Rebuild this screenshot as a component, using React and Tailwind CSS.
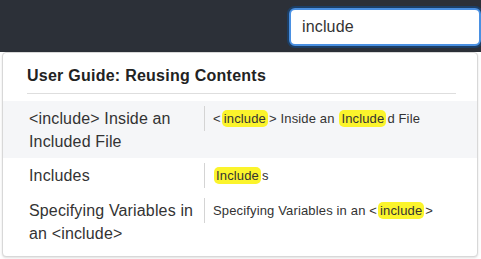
import React from 'react';

const results = [
    {
        title: '<include> Inside an Included File',
        parts: ['<', { hl: 'include' }, '> Inside an ', { hl: 'Include' }, 'd File'],
        active: true,
    },
    {
        title: 'Includes',
        parts: [{ hl: 'Include' }, 's'],
    },
    {
        title: 'Specifying Variables in an <include>',
        parts: ['Specifying Variables in an <', { hl: 'include' }, '>'],
    },
];

const Snippet = ({ parts }) => (
    <span>
        {parts.map((p, i) =>
            typeof p === 'string' ? (
                <span key={i}>{p}</span>
            ) : (
                <span key={i} className="bg-[#fbf42c] rounded-[5px] px-[2px] py-[1px] mx-[1px]">
                    {p.hl}
                </span>
            )
        )}
    </span>
);

const App = () => {
    return (
        <div
            className="w-[481px] h-[259px] bg-white relative overflow-hidden"
            style={{ fontFamily: '"Liberation Sans", Arial, sans-serif' }}
        >
            <div className="h-[52px] bg-[#2c3038] flex items-center justify-end pt-[1px]">
                <div className="w-[192px] h-[38px] rounded-[6px] bg-white border-[2px] border-[#4a90e2] ring-[2px] ring-[#1d3f66] flex items-center pl-[11px] text-[16px] tracking-[0.15px] text-[#333]">
                    include
                </div>
            </div>

            <div className="absolute top-[52px] left-[2px] w-[476px] h-[205px] bg-white border border-[#d8d8d8] rounded-[4px] shadow-sm">
                <div className="px-[24px] pt-[13px] pr-[21px]">
                    <div className="text-[16px] font-bold tracking-[0.25px] text-[#222] pb-[7px] border-b border-[#dedede] leading-[20px]">
                        User Guide: Reusing Contents
                    </div>
                </div>
                <div className="mt-[7px]">
                    {results.map((r, i) => (
                        <div
                            key={i}
                            className={`flex items-start pl-[26px] pt-[6px] pb-[5px] ${r.active ? 'bg-[#f5f6f8]' : ''}`}
                        >
                            <div className="w-[175px] shrink-0 text-[16px] tracking-[0.15px] leading-[23px] text-[#333]">
                                {r.title}
                            </div>
                            <div className="border-l border-[#d4d4d4] pl-[8px] mt-[-1px] text-[13px] tracking-[0.15px] leading-[25px] text-[#333]">
                                <Snippet parts={r.parts} />
                            </div>
                        </div>
                    ))}
                </div>
            </div>
        </div>
    );
};

export default App;
